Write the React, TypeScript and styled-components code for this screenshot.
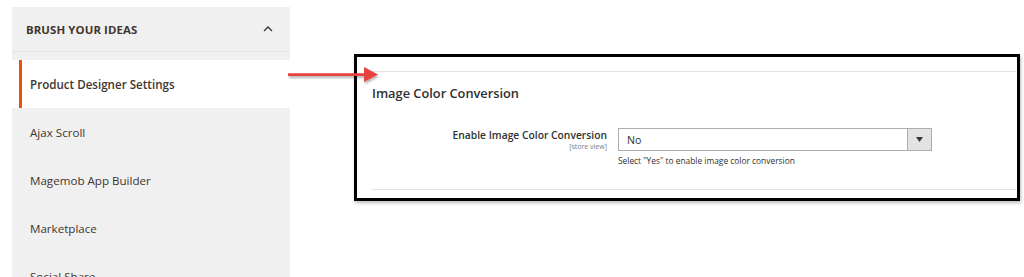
import React from "react";
import styled, { createGlobalStyle } from "styled-components";

const GlobalStyle = createGlobalStyle`
  html, body {
    margin: 0;
    padding: 0;
    background: #ffffff;
    font-family: "Open Sans", "Liberation Sans", Arial, sans-serif;
    color: #303030;
    overflow: hidden;
  }
  * { box-sizing: border-box; }
`;

const Page = styled.div`
  position: relative;
  display: flex;
  align-items: flex-start;
  width: 1024px;
  padding: 7px 0 0 12px;
  height: 277px;
  overflow: hidden;
`;

const Sidebar = styled.nav`
  width: 278px;
  flex-shrink: 0;
  background: #f0f0f0;
  display: flex;
  flex-direction: column;
`;

const SectionHeader = styled.div`
  height: 45px;
  display: flex;
  align-items: center;
  justify-content: space-between;
  padding: 0 17px 0 14px;
  border-bottom: 1px solid #e3e3e3;
  margin-bottom: 8px;
  font-size: 11.4px;
  font-weight: 700;
  color: #41362f;
  letter-spacing: 0.1px;
`;

const NavItem = styled.div<{ $active?: boolean }>`
  height: 48px;
  display: flex;
  align-items: center;
  font-size: 11.6px;
  color: #41362f;
  font-weight: ${(p) => (p.$active ? 600 : 400)};
  background: ${(p) => (p.$active ? "#ffffff" : "transparent")};
  margin-left: ${(p) => (p.$active ? "-12px" : "0")};
  padding-left: ${(p) => (p.$active ? "19px" : "18px")};
`;

const ActiveMark = styled.span`
  align-self: stretch;
  width: 3px;
  background: #eb5202;
  margin-right: 8px;
`;

const ConfigBox = styled.section`
  flex-shrink: 0;
  margin: 47px 0 0 64px;
  width: 666px;
  height: 147px;
  border: 3px solid #000000;
  box-shadow: 1px 2px 3px rgba(0, 0, 0, 0.25);
  padding: 14px 1px 0 15px;
  background: #ffffff;
`;

const Fieldset = styled.div`
  border-top: 1px solid #e3e3e3;
  border-bottom: 1px solid #e3e3e3;
  height: 119px;
  display: flex;
  flex-direction: column;
`;

const Title = styled.h3`
  margin: 13px 0 0 0;
  font-size: 12.8px;
  font-weight: 600;
  color: #303030;
  line-height: 16px;
`;

const FieldRow = styled.div`
  display: flex;
  align-items: flex-start;
  margin-top: 27px;
`;

const LabelCol = styled.div`
  width: 246px;
  text-align: right;
  padding-right: 11px;
  padding-top: 1px;
`;

const Label = styled.div`
  font-size: 10.3px;
  font-weight: 600;
  color: #303030;
  line-height: 13px;
`;

const Scope = styled.div`
  font-size: 7px;
  color: #808080;
  line-height: 9px;
`;

const ControlCol = styled.div`
  display: flex;
  flex-direction: column;
`;

const Select = styled.div`
  width: 314px;
  height: 23px;
  border: 1px solid #adadad;
  display: flex;
  align-items: stretch;
  font-size: 10.6px;
  color: #303030;
`;

const SelectValue = styled.div`
  flex: 1;
  display: flex;
  align-items: center;
  padding-left: 8px;
`;

const SelectButton = styled.div`
  width: 24px;
  background: #e3e3e3;
  border-left: 1px solid #adadad;
  display: flex;
  align-items: center;
  justify-content: center;
`;

const Note = styled.div`
  margin-top: 4px;
  font-size: 8.4px;
  color: #303030;
  line-height: 11px;
`;

const Arrow = styled.svg`
  position: absolute;
  left: 286px;
  top: 64px;
  overflow: visible;
`;

export default function App() {
  const items = ["Ajax Scroll", "Magemob App Builder", "Marketplace", "Social Share"];
  return (
    <>
      <GlobalStyle />
      <Page>
        <Sidebar>
          <SectionHeader>
            <span>BRUSH YOUR IDEAS</span>
            <svg width="10" height="6" viewBox="0 0 10 6">
              <path d="M1 5 L5 1 L9 5" fill="none" stroke="#41362f" strokeWidth="1.4" />
            </svg>
          </SectionHeader>
          <NavItem $active>
            <ActiveMark />
            Product Designer Settings
          </NavItem>
          {items.map((t) => (
            <NavItem key={t}>{t}</NavItem>
          ))}
        </Sidebar>
        <ConfigBox>
          <Fieldset>
            <Title>Image Color Conversion</Title>
            <FieldRow>
              <LabelCol>
                <Label>Enable Image Color Conversion</Label>
                <Scope>[store view]</Scope>
              </LabelCol>
              <ControlCol>
                <Select>
                  <SelectValue>No</SelectValue>
                  <SelectButton>
                    <svg width="7" height="5" viewBox="0 0 7 5">
                      <path d="M0 0 H7 L3.5 5 Z" fill="#41362f" />
                    </svg>
                  </SelectButton>
                </Select>
                <Note>Select "Yes" to enable image color conversion</Note>
              </ControlCol>
            </FieldRow>
          </Fieldset>
        </ConfigBox>
        <Arrow width="96" height="22" viewBox="0 0 96 22">
          <defs>
            <filter id="sh" x="-10%" y="-50%" width="120%" height="200%">
              <feDropShadow dx="1" dy="2" stdDeviation="1" floodColor="#000" floodOpacity="0.3" />
            </filter>
          </defs>
          <g filter="url(#sh)">
            <path d="M2 9.2 H80 V12 H2 Z" fill="#e8423f" />
            <path d="M78 3 L92 10.6 L78 18 Z" fill="#e8423f" />
          </g>
        </Arrow>
      </Page>
    </>
  );
}
